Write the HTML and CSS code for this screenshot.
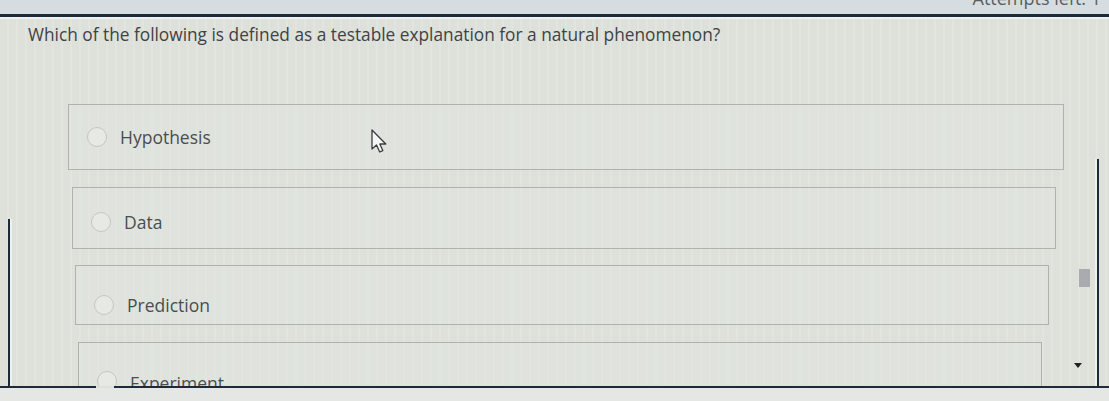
FILE: index.html
```html
<!DOCTYPE html>
<html>
<head>
<meta charset="utf-8">
<link rel="stylesheet" href="styles.css">
</head>
<body>
<div class="top"><span class="attempts">Attempts left: 1</span></div>
<div class="rule"></div>
<div class="frame">
  <p class="question">Which of the following is defined as a testable explanation for a natural phenomenon?</p>
  <div class="options">
    <label class="opt o1"><span class="radio"></span><span class="label">Hypothesis</span></label>
    <label class="opt o2"><span class="radio"></span><span class="label">Data</span></label>
    <label class="opt o3"><span class="radio"></span><span class="label">Prediction</span></label>
    <label class="opt o4"><span class="radio"></span><span class="label">Experiment</span></label>
  </div>
  <div class="thumb"></div>
  <div class="down"></div>
  <svg class="cursor" width="18" height="25" viewBox="0 0 18 25">
    <path d="M2 1 L2 20 L6.5 16 L9.7 23 L12.8 21.6 L9.8 15 L15.8 15 Z" fill="#f4f6f3" stroke="#3a3d3f" stroke-width="1.3" stroke-linejoin="round"/>
  </svg>
</div>
<div class="bottom"><span class="gap"></span></div>
</body>
</html>
```
FILE: styles.css
```css
html, body {
  margin: 0;
  padding: 0;
}
body {
  width: 1109px;
  height: 401px;
  overflow: hidden;
  background: #dde1da;
  font-family: "Open Sans", "Noto Sans", sans-serif;
  color: #454749;
}
.top {
  height: 14px;
  background: #d6dde0;
  overflow: hidden;
  display: flex;
  justify-content: flex-end;
  padding-right: 8px;
}
.attempts {
  font-size: 18px;
  line-height: 18px;
  margin-top: -11px;
  color: #5a5e62;
}
.rule {
  height: 3px;
  background: #1d2a3a;
  border-bottom: 2px solid #eef1f1;
}
.frame {
  position: relative;
  height: 367px;
  overflow: hidden;
  background-color: #dde1da;
  background-image: repeating-linear-gradient(90deg, rgba(255,255,255,0) 0 7px, rgba(255,255,255,0.14) 7px 9px);
  border-bottom: 2px solid #1d2a3a;
}
.frame::before {
  content: "";
  position: absolute;
  left: 8px;
  top: 200px;
  bottom: 0;
  width: 2px;
  background: #1d2a3a;
  box-shadow: 2px 0 0 #eef0ee;
}
.frame::after {
  content: "";
  position: absolute;
  left: 1097px;
  top: 140px;
  bottom: 0;
  width: 2px;
  background: #1d2a3a;
  box-shadow: -2px 0 0 #eef0ee;
}
.question {
  margin: 0;
  padding: 4px 0 0 28px;
  font-size: 17.3px;
  line-height: 24px;
  color: #404345;
}
.options {
  display: flex;
  flex-direction: column;
  margin-top: 57px;
}
.opt {
  display: flex;
  align-items: center;
  box-sizing: border-box;
  border: 1px solid #b0b3ad;
  background: rgba(226,229,223,0.5);
  padding-left: 18px;
  flex: none;
}
.o1 { margin-left: 68px; width: 996px; height: 66px; }
.o2 { margin-left: 72px; width: 984px; height: 62px; margin-top: 17px; padding-top: 8px; }
.o3 { margin-left: 75px; width: 974px; height: 60px; margin-top: 16px; padding-top: 20px; }
.o4 { margin-left: 78px; width: 964px; height: 60px; margin-top: 17px; align-items: flex-start; padding-top: 28px; }
.radio {
  width: 18px;
  height: 18px;
  border-radius: 50%;
  border: 1.5px solid #c4c7c1;
  background: #e6e9e4;
  flex: none;
}
.label {
  margin-left: 13px;
  font-size: 17.5px;
  color: #4a4d50;
}
.thumb {
  position: absolute;
  left: 1079px;
  top: 250px;
  width: 11px;
  height: 18px;
  background: #a9abb0;
}
.down {
  position: absolute;
  left: 1074px;
  top: 344px;
  width: 0;
  height: 0;
  border-left: 4px solid transparent;
  border-right: 4px solid transparent;
  border-top: 5px solid #1f2326;
}
.cursor {
  position: absolute;
  left: 370px;
  top: 110px;
}
.bottom {
  position: relative;
  height: 13px;
  background: #e4e7e4;
}
.gap {
  position: absolute;
  left: 96px;
  top: -2px;
  width: 18px;
  height: 2px;
  background: #dde1da;
}
```
